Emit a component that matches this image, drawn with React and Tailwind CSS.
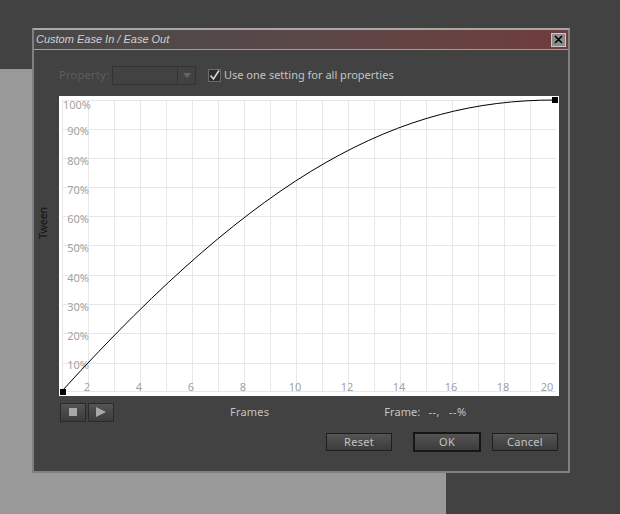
const xLines = [62, 88, 114, 140, 166, 192, 218, 244, 270, 296, 322, 348, 374, 400, 426, 452, 478, 504, 530];
const yLines = [100, 129, 158, 187, 216, 245, 275, 304, 333, 363, 391];
const yLabels = [
  ["100%", 109, 91], ["90%", 135, 89], ["80%", 165, 89], ["70%", 194, 89], ["60%", 223, 89],
  ["50%", 252, 89], ["40%", 282, 89], ["30%", 311, 89], ["20%", 340, 89], ["10%", 369, 89],
];
const xLabels = [[2, 87], [4, 139], [6, 191], [8, 243], [10, 295], [12, 347], [14, 399], [16, 451], [18, 503], [20, 547]];

function Chart() {
  return (
    <svg width="500" height="300" viewBox="59 96 500 300" className="block bg-white" style={{ fontFamily: '"Noto Sans", sans-serif' }}>
      {xLines.map((x) => (
        <line key={x} x1={x + 0.5} y1="100" x2={x + 0.5} y2="392" stroke="#e8e8e8" />
      ))}
      {yLines.map((y) => (
        <line key={y} x1="62" y1={y + 0.5} x2="556" y2={y + 0.5} stroke="#e8e8e8" />
      ))}
      {yLabels.map(([label, y, x]) => (
        <text key={label} x={x} y={y} textAnchor="end" fontSize="11" fill="#a2a2a2">
          {label}
        </text>
      ))}
      {xLabels.map(([label, x]) => (
        <text key={label} x={x} y="391" textAnchor="middle" fontSize="11" fill="#a2a2a2">
          {label}
        </text>
      ))}
      <path d="M62 391 C262 171 399 100 555 100" fill="none" stroke="#000" strokeWidth="1" />
      <rect x="60" y="389" width="6" height="6" fill="#000" />
      <rect x="552" y="97" width="6" height="6" fill="#000" />
    </svg>
  );
}

function PlayerButton({ children }) {
  return (
    <button className="flex h-[19px] w-[26px] items-center justify-center border border-[#2a2a2a] bg-gradient-to-b from-[#545454] to-[#3c3c3c]">
      {children}
    </button>
  );
}

function ActionButton({ label, isDefault }) {
  return (
    <button
      className={
        isDefault
          ? "h-[20px] w-[68px] border-2 border-[#161616] bg-gradient-to-b from-[#545454] to-[#3c3c3c] text-[11px] tracking-[0.3px] text-[#c4c4c4]"
          : "h-[18px] w-[66px] border border-[#1e1e1e] bg-gradient-to-b from-[#545454] to-[#3c3c3c] text-[11px] tracking-[0.3px] text-[#c4c4c4]"
      }
    >
      {label}
    </button>
  );
}

export default function App() {
  return (
    <div className="relative h-[514px] w-[620px] overflow-hidden bg-[#424242]" style={{ fontFamily: '"Noto Sans", sans-serif' }}>
      <div className="mt-[69px] h-[445px] w-[446px] bg-[#999999]"></div>

      {/* Dialog */}
      <div className="absolute left-[32px] top-[28px] flex h-[445px] w-[538px] flex-col border-2 border-[#808080] border-t-[#a8a8a8] bg-[#424242]">
        <div className="flex h-[20px] shrink-0 items-center justify-between border-b border-[#a0a0a0] bg-gradient-to-r from-[#484848] via-[#5a4848] to-[#703c3c] pl-[2px] pr-[2px]">
          <span className="text-[11px] italic leading-none text-[#d0d0d0]" style={{ fontFamily: '"Liberation Sans", sans-serif' }}>
            Custom Ease In / Ease Out
          </span>
          <button className="flex h-[14px] w-[15px] items-center justify-center border border-[#c8c8c8] bg-[#8c8c8c]">
            <svg width="9" height="9" viewBox="0 0 9 9">
              <path d="M1 1 L8 8 M8 1 L1 8" stroke="#000" strokeWidth="1.6" />
            </svg>
          </button>
        </div>

        <div className="flex h-[46px] shrink-0 items-center pl-[25px] pt-[4px]">
          <span className="w-[53px] text-[11px] tracking-[0.3px] text-[#5e5e5e]">Property:</span>
          <div className="flex h-[19px] w-[84px] justify-end border border-[#333333]">
            <div className="flex w-[18px] items-center justify-center border-l border-[#333333]">
              <div className="h-0 w-0 border-x-[4px] border-t-[5px] border-x-transparent border-t-[#666666]"></div>
            </div>
          </div>
          <div className="ml-[12px] flex h-[13px] w-[13px] items-center justify-center border border-[#6a6a6a] bg-[#2e2e2e]">
            <svg width="13" height="13" viewBox="0 0 13 13" className="shrink-0">
              <path d="M2.5 6.5 L5.5 10 L11 1.5" fill="none" stroke="#d8d8d8" strokeWidth="1.6" />
            </svg>
          </div>
          <span className="ml-[3px] text-[11px] text-[#c4c4c4]">Use one setting for all properties</span>
        </div>

        <div className="flex shrink-0 pl-[25px]">
          <Chart />
          <span className="absolute left-[-11px] top-[186px] h-[14px] w-[40px] -rotate-90 text-center text-[10.5px] leading-[14px] text-[#111111]">
            Tween
          </span>
        </div>

        <div className="mt-[6px] flex h-[20px] shrink-0 items-center pl-[26px]">
          <div className="flex gap-[2px]">
            <PlayerButton>
              <div className="h-[8px] w-[8px] bg-[#a8a8a8]"></div>
            </PlayerButton>
            <PlayerButton>
              <div className="h-0 w-0 border-y-[5px] border-l-[10px] border-y-transparent border-l-[#a8a8a8]"></div>
            </PlayerButton>
          </div>
          <span className="ml-[116px] text-[11px] tracking-[0.2px] text-[#c4c4c4]">Frames</span>
          <span className="ml-[115px] text-[11px] tracking-[0.1px] text-[#c4c4c4]">Frame:</span>
          <span className="ml-[8px] text-[11px] tracking-[0.5px] text-[#c4c4c4]">--,</span>
          <span className="ml-[9px] text-[11px] tracking-[0.5px] text-[#c4c4c4]">--%</span>
        </div>

        <div className="mt-[10px] flex shrink-0 items-center pl-[292px]">
          <ActionButton label="Reset" />
          <div className="ml-[21px] flex">
            <ActionButton label="OK" isDefault />
          </div>
          <div className="ml-[11px] flex">
            <ActionButton label="Cancel" />
          </div>
        </div>
      </div>
    </div>
  );
}
